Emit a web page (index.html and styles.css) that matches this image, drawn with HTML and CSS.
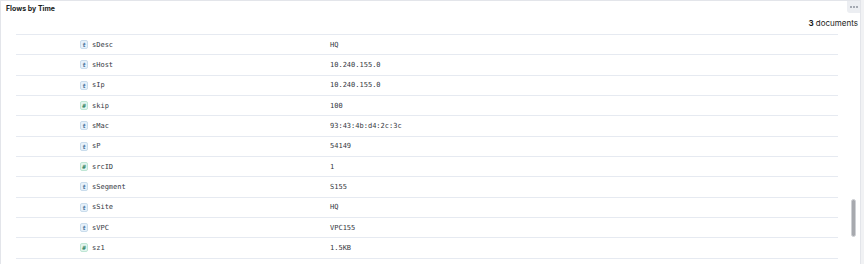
FILE: index.html
```html
<!DOCTYPE html>
<html lang="en">
  <head>
    <meta charset="UTF-8" />
    <meta name="viewport" content="width=device-width, initial-scale=1.0" />
    <link rel="stylesheet" href="styles.css">
    <title>Flows by Time</title>
  </head>
  <body>
    <div class="panel">
      <h1 class="panel-title">Flows by Time</h1>
      <button class="panel-menu"><i></i><i></i><i></i></button>

      <div class="panel-body">
        <div class="content">
          <p class="count"><b>3</b> documents</p>

          <div class="rows">
            <div class="row"><span class="type txt">t</span><span class="field">sDesc</span><span class="value">HQ</span></div>
            <div class="row"><span class="type txt">t</span><span class="field">sHost</span><span class="value">10.240.155.0</span></div>
            <div class="row"><span class="type txt">t</span><span class="field">sIp</span><span class="value">10.240.155.0</span></div>
            <div class="row"><span class="type num">#</span><span class="field">skip</span><span class="value">100</span></div>
            <div class="row"><span class="type txt">t</span><span class="field">sMac</span><span class="value">93:43:4b:d4:2c:3c</span></div>
            <div class="row"><span class="type txt">t</span><span class="field">sP</span><span class="value">54149</span></div>
            <div class="row"><span class="type num">#</span><span class="field">srcID</span><span class="value">1</span></div>
            <div class="row"><span class="type txt">t</span><span class="field">sSegment</span><span class="value">S155</span></div>
            <div class="row"><span class="type txt">t</span><span class="field">sSite</span><span class="value">HQ</span></div>
            <div class="row"><span class="type txt">t</span><span class="field">sVPC</span><span class="value">VPC155</span></div>
            <div class="row"><span class="type num">#</span><span class="field">sz1</span><span class="value">1.5KB</span></div>
          </div>
        </div>

        <div class="scrollbar"><div class="thumb"></div></div>
      </div>
    </div>
  </body>
</html>
```

FILE: styles.css
```css
* {
  margin: 0;
  padding: 0;
  box-sizing: border-box;
}

body {
  background-color: #f1f2f4;
  font-family: Inter, "Liberation Sans", sans-serif;
  color: #1a1c21;
  overflow: hidden;
}

.panel {
  position: relative;
  width: 861px;
  height: 264px;
  background-color: white;
  border: 1px solid #e3e5ea;
  border-bottom: none;
  overflow: hidden;
}

.panel-title {
  font-size: 7px;
  font-weight: 700;
  padding: 3px 0 0 5px;
  line-height: 9px;
}

.panel-menu {
  position: absolute;
  top: 0;
  right: 0;
  width: 13px;
  height: 12px;
  border: none;
  border-radius: 0 0 0 3px;
  background-color: #eceef2;
  display: flex;
  align-items: center;
  justify-content: center;
  gap: 1px;
}

.panel-menu i {
  width: 2px;
  height: 2px;
  border-radius: 50%;
  background-color: #8d929c;
}

.panel-body {
  display: flex;
}

.content {
  flex: 1;
  padding: 0 10px 0 15px;
}

.count {
  text-align: right;
  font-size: 8px;
  line-height: 10px;
  padding: 5px 0 6px;
  margin-right: -20px;
}

.rows {
  border-top: 1px solid #e6eaf1;
}

.row {
  display: flex;
  align-items: center;
  height: 20.33px;
  border-bottom: 1px solid #e6eaf1;
  padding-left: 64px;
  font-family: "DejaVu Sans Mono", monospace;
  font-size: 7px;
  color: #343741;
}

.type {
  display: inline-flex;
  align-items: center;
  justify-content: center;
  width: 8px;
  height: 9px;
  border-radius: 2px;
  font-size: 6px;
  font-style: italic;
  font-weight: 700;
  margin-right: 4px;
}

.txt {
  background-color: #e6f1fa;
  border: 1px solid #c9dcec;
  color: #3f6b96;
}

.num {
  background-color: #e3f5ee;
  border: 1px solid #bfe6d5;
  color: #3b8a6b;
}

.field {
  width: 238px;
}

.scrollbar {
  width: 12px;
  padding: 186px 3px 0 3px;
}

.thumb {
  width: 5px;
  height: 38px;
  border-radius: 3px;
  background-color: #a7a9ae;
  border: 1px solid #cfd1d5;
}
```
